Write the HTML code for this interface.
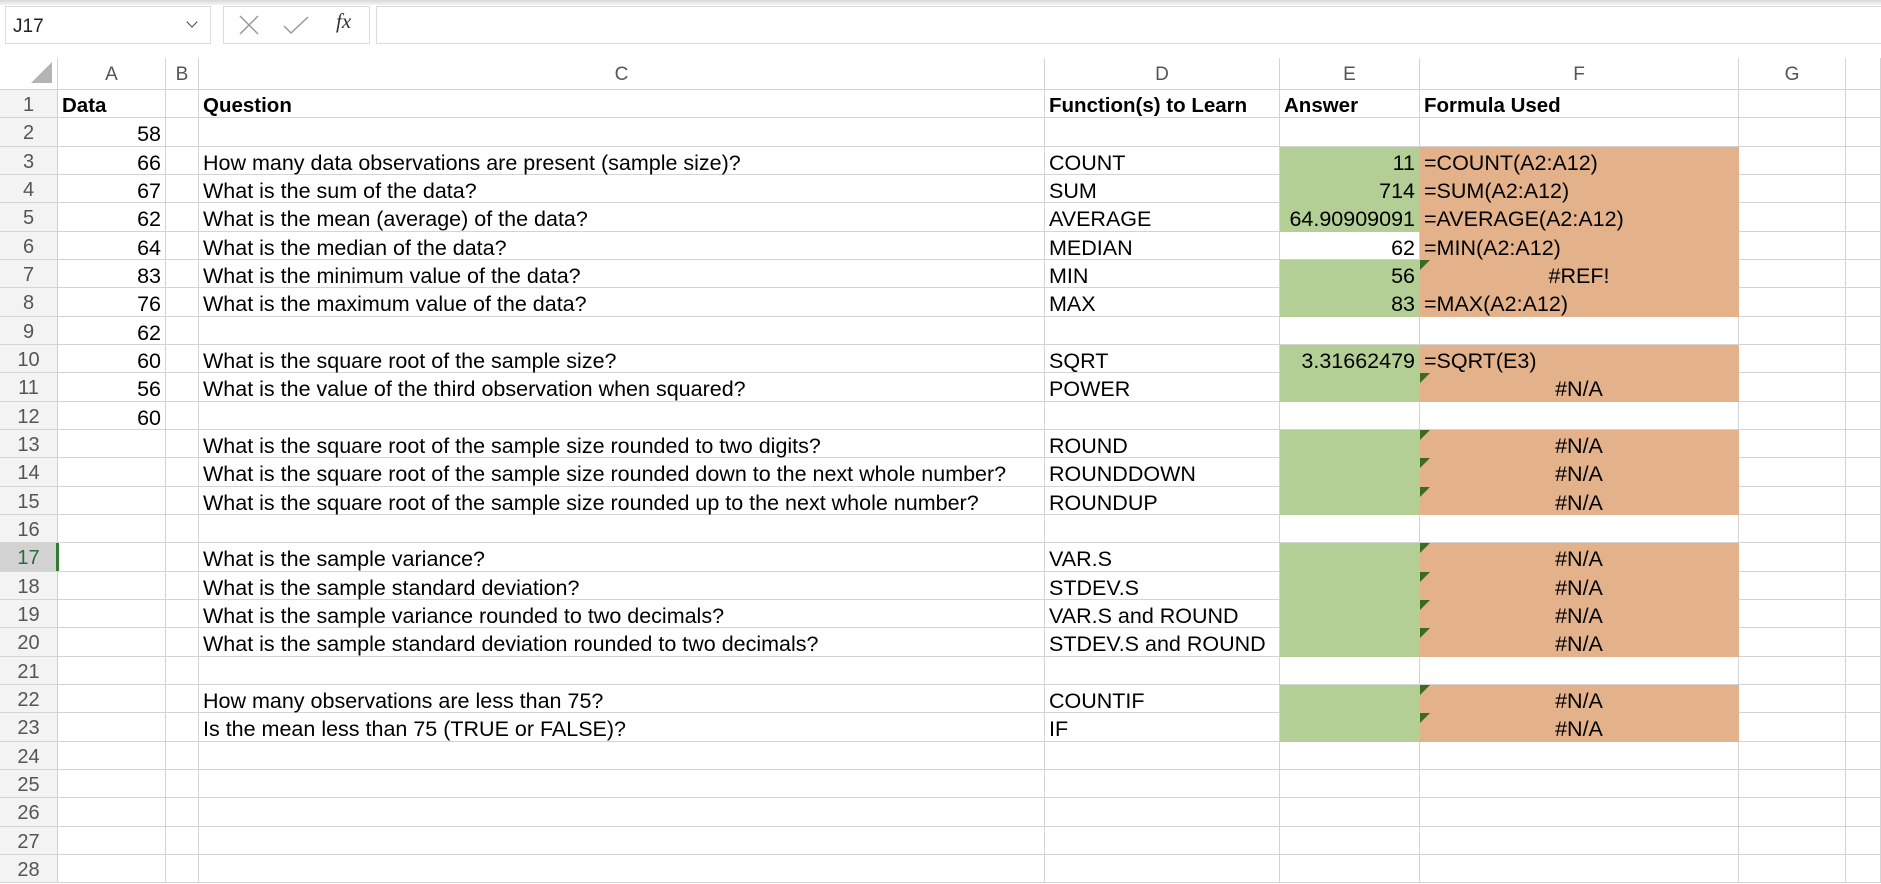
<!DOCTYPE html>
<html><head><meta charset="utf-8"><style>
*{box-sizing:border-box;margin:0;padding:0}
body{width:1881px;height:870px;overflow:hidden;background:#fff;font-family:"Liberation Sans",Arial,sans-serif;position:relative}
.shadow{position:absolute;left:0;top:0;width:1881px;height:5px;background:linear-gradient(#d8d8d8,#f4f4f4)}
.nb{position:absolute;left:5px;top:6px;width:206px;height:38px;border:1px solid #dcdcdc;font-size:19px;color:#222;padding:9px 0 0 7px}
.nb .chev{position:absolute;right:14px;top:11px;width:8px;height:8px;border-right:1.5px solid #444;border-bottom:1.5px solid #444;transform:rotate(45deg)}
.fb1{position:absolute;left:223px;top:6px;width:147px;height:38px;border:1px solid #dcdcdc}
.fb2{position:absolute;left:376px;top:6px;width:1510px;height:38px;border:1px solid #dcdcdc}
.fx{position:absolute;left:336px;top:9px;font-family:"Liberation Serif",serif;font-style:italic;font-size:21px;color:#333}
.hdr{position:absolute;top:58px;height:32px;left:0;width:1881px;border-bottom:1px solid #d4d4d4;display:flex}
.hdr div{border-right:1px solid #d4d4d4;text-align:center;font-size:19px;color:#555;padding-top:6px;height:31px}
.corner{position:absolute;left:31px;top:62px;width:0;height:0;border-left:21px solid transparent;border-bottom:21px solid #b4b4b4}
.row{position:absolute;left:0;width:1881px;height:28.4px;display:flex}
.c{height:100%;border-right:1px solid #d4d4d4;border-bottom:1px solid #d4d4d4;font-size:21.5px;color:#000;line-height:28px;padding-top:2px;white-space:nowrap;overflow:visible;position:relative;padding-left:4px;padding-right:4px}
.rh{width:58px;background:#f3f3f3;color:#555;text-align:center;font-size:20px;padding:1px 0 0 0;border-right:1px solid #d0d0d0}
.r{text-align:right}
.b{font-weight:bold;font-size:20.5px}
.g{background:#b3cf95;border-right-color:#b3cf95;border-bottom-color:#b3cf95}
.o{background:#e3b18a;border-right-color:#e3b18a;border-bottom-color:#e3b18a}
.t::before{content:"";position:absolute;left:0;top:0;border-top:10px solid #3b6a24;border-right:10px solid transparent}
.ctr{text-align:center}
.w1{width:108px}.w2{width:33px}.w3{width:846px}.w4{width:235px}.w5{width:140px}.w6{width:319px}.w7{width:107px}.w8{width:35px}
.sel{background:#d2d2d2;color:#2e6b3a}
.sel::after{content:"";position:absolute;right:-2px;top:0;width:3px;height:100%;background:#2e7d32}
</style></head><body>
<div class="shadow"></div>
<div class="nb">J17<span class="chev"></span></div>
<div class="fb1"></div>
<svg style="position:absolute;left:238px;top:14px" width="80" height="24"><path d="M2 2 L20 20 M20 2 L2 20" stroke="#999" stroke-width="1.5" fill="none"/><path d="M46 12 L53 19 L70 3" stroke="#999" stroke-width="1.5" fill="none"/></svg>
<div class="fx">fx</div>
<div class="fb2"></div>
<div class="hdr"><div style="width:58px;border-right:1px solid #d4d4d4"></div><div style="width:108px">A</div><div style="width:33px">B</div><div style="width:846px">C</div><div style="width:235px">D</div><div style="width:140px">E</div><div style="width:319px">F</div><div style="width:107px">G</div><div style="width:35px"></div></div>
<div class="corner"></div>

<div class="row" style="top:90px"><div class="c rh">1</div><div class="c w1 b">Data</div><div class="c w2"></div><div class="c w3 b">Question</div><div class="c w4 b">Function(s) to Learn</div><div class="c w5 b">Answer</div><div class="c w6 b">Formula Used</div><div class="c w7"></div><div class="c w8"></div></div>
<div class="row" style="top:118.4px"><div class="c rh">2</div><div class="c w1 r">58</div><div class="c w2"></div><div class="c w3"></div><div class="c w4"></div><div class="c w5"></div><div class="c w6"></div><div class="c w7"></div><div class="c w8"></div></div>
<div class="row" style="top:146.7px"><div class="c rh">3</div><div class="c w1 r">66</div><div class="c w2"></div><div class="c w3">How many data observations are present (sample size)?</div><div class="c w4">COUNT</div><div class="c w5 r g">11</div><div class="c w6 o">=COUNT(A2:A12)</div><div class="c w7"></div><div class="c w8"></div></div>
<div class="row" style="top:175px"><div class="c rh">4</div><div class="c w1 r">67</div><div class="c w2"></div><div class="c w3">What is the sum of the data?</div><div class="c w4">SUM</div><div class="c w5 r g">714</div><div class="c w6 o">=SUM(A2:A12)</div><div class="c w7"></div><div class="c w8"></div></div>
<div class="row" style="top:203.4px"><div class="c rh">5</div><div class="c w1 r">62</div><div class="c w2"></div><div class="c w3">What is the mean (average) of the data?</div><div class="c w4">AVERAGE</div><div class="c w5 r g">64.90909091</div><div class="c w6 o">=AVERAGE(A2:A12)</div><div class="c w7"></div><div class="c w8"></div></div>
<div class="row" style="top:231.7px"><div class="c rh">6</div><div class="c w1 r">64</div><div class="c w2"></div><div class="c w3">What is the median of the data?</div><div class="c w4">MEDIAN</div><div class="c w5 r">62</div><div class="c w6 o">=MIN(A2:A12)</div><div class="c w7"></div><div class="c w8"></div></div>
<div class="row" style="top:260px"><div class="c rh">7</div><div class="c w1 r">83</div><div class="c w2"></div><div class="c w3">What is the minimum value of the data?</div><div class="c w4">MIN</div><div class="c w5 r g">56</div><div class="c w6 o t ctr">#REF!</div><div class="c w7"></div><div class="c w8"></div></div>
<div class="row" style="top:288.4px"><div class="c rh">8</div><div class="c w1 r">76</div><div class="c w2"></div><div class="c w3">What is the maximum value of the data?</div><div class="c w4">MAX</div><div class="c w5 r g">83</div><div class="c w6 o">=MAX(A2:A12)</div><div class="c w7"></div><div class="c w8"></div></div>
<div class="row" style="top:316.7px"><div class="c rh">9</div><div class="c w1 r">62</div><div class="c w2"></div><div class="c w3"></div><div class="c w4"></div><div class="c w5"></div><div class="c w6"></div><div class="c w7"></div><div class="c w8"></div></div>
<div class="row" style="top:345px"><div class="c rh">10</div><div class="c w1 r">60</div><div class="c w2"></div><div class="c w3">What is the square root of the sample size?</div><div class="c w4">SQRT</div><div class="c w5 r g">3.31662479</div><div class="c w6 o">=SQRT(E3)</div><div class="c w7"></div><div class="c w8"></div></div>
<div class="row" style="top:373.4px"><div class="c rh">11</div><div class="c w1 r">56</div><div class="c w2"></div><div class="c w3">What is the value of the third observation when squared?</div><div class="c w4">POWER</div><div class="c w5 g"></div><div class="c w6 o t ctr">#N/A</div><div class="c w7"></div><div class="c w8"></div></div>
<div class="row" style="top:401.7px"><div class="c rh">12</div><div class="c w1 r">60</div><div class="c w2"></div><div class="c w3"></div><div class="c w4"></div><div class="c w5"></div><div class="c w6"></div><div class="c w7"></div><div class="c w8"></div></div>
<div class="row" style="top:430px"><div class="c rh">13</div><div class="c w1"></div><div class="c w2"></div><div class="c w3">What is the square root of the sample size rounded to two digits?</div><div class="c w4">ROUND</div><div class="c w5 g"></div><div class="c w6 o t ctr">#N/A</div><div class="c w7"></div><div class="c w8"></div></div>
<div class="row" style="top:458.4px"><div class="c rh">14</div><div class="c w1"></div><div class="c w2"></div><div class="c w3">What is the square root of the sample size rounded down to the next whole number?</div><div class="c w4">ROUNDDOWN</div><div class="c w5 g"></div><div class="c w6 o t ctr">#N/A</div><div class="c w7"></div><div class="c w8"></div></div>
<div class="row" style="top:486.7px"><div class="c rh">15</div><div class="c w1"></div><div class="c w2"></div><div class="c w3">What is the square root of the sample size rounded up to the next whole number?</div><div class="c w4">ROUNDUP</div><div class="c w5 g"></div><div class="c w6 o t ctr">#N/A</div><div class="c w7"></div><div class="c w8"></div></div>
<div class="row" style="top:515px"><div class="c rh">16</div><div class="c w1"></div><div class="c w2"></div><div class="c w3"></div><div class="c w4"></div><div class="c w5"></div><div class="c w6"></div><div class="c w7"></div><div class="c w8"></div></div>
<div class="row" style="top:543.4px"><div class="c rh sel">17</div><div class="c w1"></div><div class="c w2"></div><div class="c w3">What is the sample variance?</div><div class="c w4">VAR.S</div><div class="c w5 g"></div><div class="c w6 o t ctr">#N/A</div><div class="c w7"></div><div class="c w8"></div></div>
<div class="row" style="top:571.7px"><div class="c rh">18</div><div class="c w1"></div><div class="c w2"></div><div class="c w3">What is the sample standard deviation?</div><div class="c w4">STDEV.S</div><div class="c w5 g"></div><div class="c w6 o t ctr">#N/A</div><div class="c w7"></div><div class="c w8"></div></div>
<div class="row" style="top:600px"><div class="c rh">19</div><div class="c w1"></div><div class="c w2"></div><div class="c w3">What is the sample variance rounded to two decimals?</div><div class="c w4">VAR.S and ROUND</div><div class="c w5 g"></div><div class="c w6 o t ctr">#N/A</div><div class="c w7"></div><div class="c w8"></div></div>
<div class="row" style="top:628.4px"><div class="c rh">20</div><div class="c w1"></div><div class="c w2"></div><div class="c w3">What is the sample standard deviation rounded to two decimals?</div><div class="c w4">STDEV.S and ROUND</div><div class="c w5 g"></div><div class="c w6 o t ctr">#N/A</div><div class="c w7"></div><div class="c w8"></div></div>
<div class="row" style="top:656.7px"><div class="c rh">21</div><div class="c w1"></div><div class="c w2"></div><div class="c w3"></div><div class="c w4"></div><div class="c w5"></div><div class="c w6"></div><div class="c w7"></div><div class="c w8"></div></div>
<div class="row" style="top:685px"><div class="c rh">22</div><div class="c w1"></div><div class="c w2"></div><div class="c w3">How many observations are less than 75?</div><div class="c w4">COUNTIF</div><div class="c w5 g"></div><div class="c w6 o t ctr">#N/A</div><div class="c w7"></div><div class="c w8"></div></div>
<div class="row" style="top:713.4px"><div class="c rh">23</div><div class="c w1"></div><div class="c w2"></div><div class="c w3">Is the mean less than 75 (TRUE or FALSE)?</div><div class="c w4">IF</div><div class="c w5 g"></div><div class="c w6 o t ctr">#N/A</div><div class="c w7"></div><div class="c w8"></div></div>
<div class="row" style="top:741.7px"><div class="c rh">24</div><div class="c w1"></div><div class="c w2"></div><div class="c w3"></div><div class="c w4"></div><div class="c w5"></div><div class="c w6"></div><div class="c w7"></div><div class="c w8"></div></div>
<div class="row" style="top:770px"><div class="c rh">25</div><div class="c w1"></div><div class="c w2"></div><div class="c w3"></div><div class="c w4"></div><div class="c w5"></div><div class="c w6"></div><div class="c w7"></div><div class="c w8"></div></div>
<div class="row" style="top:798.4px"><div class="c rh">26</div><div class="c w1"></div><div class="c w2"></div><div class="c w3"></div><div class="c w4"></div><div class="c w5"></div><div class="c w6"></div><div class="c w7"></div><div class="c w8"></div></div>
<div class="row" style="top:826.7px"><div class="c rh">27</div><div class="c w1"></div><div class="c w2"></div><div class="c w3"></div><div class="c w4"></div><div class="c w5"></div><div class="c w6"></div><div class="c w7"></div><div class="c w8"></div></div>
<div class="row" style="top:855px"><div class="c rh">28</div><div class="c w1"></div><div class="c w2"></div><div class="c w3"></div><div class="c w4"></div><div class="c w5"></div><div class="c w6"></div><div class="c w7"></div><div class="c w8"></div></div>
</body></html>
